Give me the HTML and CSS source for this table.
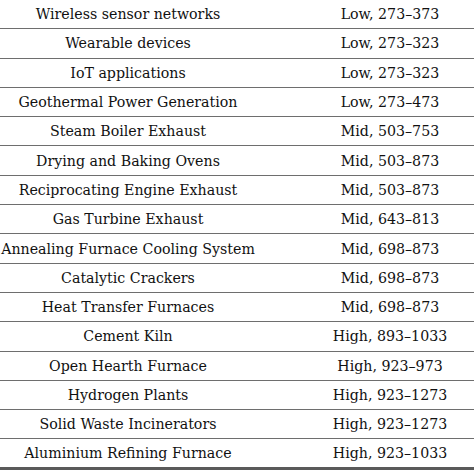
FILE: index.html
```html
<!DOCTYPE html>
<html>
<head>
<meta charset="utf-8">
<link rel="stylesheet" href="styles.css">
</head>
<body>
<div class="table">
  <div class="row"><div class="cell">Wireless sensor networks</div><div class="cell val">Low, 273–373</div></div>
  <div class="row"><div class="cell">Wearable devices</div><div class="cell val">Low, 273–323</div></div>
  <div class="row"><div class="cell">IoT applications</div><div class="cell val">Low, 273–323</div></div>
  <div class="row"><div class="cell">Geothermal Power Generation</div><div class="cell val">Low, 273–473</div></div>
  <div class="row"><div class="cell">Steam Boiler Exhaust</div><div class="cell val">Mid, 503–753</div></div>
  <div class="row"><div class="cell">Drying and Baking Ovens</div><div class="cell val">Mid, 503–873</div></div>
  <div class="row"><div class="cell">Reciprocating Engine Exhaust</div><div class="cell val">Mid, 503–873</div></div>
  <div class="row"><div class="cell">Gas Turbine Exhaust</div><div class="cell val">Mid, 643–813</div></div>
  <div class="row"><div class="cell">Annealing Furnace Cooling System</div><div class="cell val">Mid, 698–873</div></div>
  <div class="row"><div class="cell">Catalytic Crackers</div><div class="cell val">Mid, 698–873</div></div>
  <div class="row"><div class="cell">Heat Transfer Furnaces</div><div class="cell val">Mid, 698–873</div></div>
  <div class="row"><div class="cell">Cement Kiln</div><div class="cell val">High, 893–1033</div></div>
  <div class="row"><div class="cell">Open Hearth Furnace</div><div class="cell val">High, 923–973</div></div>
  <div class="row"><div class="cell">Hydrogen Plants</div><div class="cell val">High, 923–1273</div></div>
  <div class="row"><div class="cell">Solid Waste Incinerators</div><div class="cell val">High, 923–1273</div></div>
  <div class="row last"><div class="cell">Aluminium Refining Furnace</div><div class="cell val">High, 923–1033</div></div>
</div>
</body>
</html>
```

FILE: styles.css
```css
html, body {
  margin: 0;
  padding: 0;
  background: #ffffff;
}
.table {
  width: 474px;
  font-family: "DejaVu Serif", "Liberation Serif", serif;
  font-size: 14.2px;
  color: #111111;
}
.row {
  display: grid;
  grid-template-columns: 256px 1fr;
  height: 29.3px;
  box-sizing: border-box;
  border-bottom: 1.5px solid #6e6e6e;
}
.row.last {
  border-bottom: 3px solid #5a5a5a;
  height: 31px;
}
.cell {
  display: flex;
  align-items: center;
  justify-content: center;
  white-space: nowrap;
}
.val {
  padding-left: 50px;
}
```
